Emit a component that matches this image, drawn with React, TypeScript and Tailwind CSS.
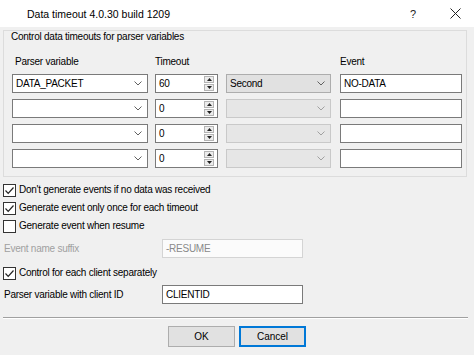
import React from "react";

const FONT = { fontFamily: '"Liberation Sans", Arial, sans-serif' };

function Chevron({ color = "#606060" }: { color?: string }) {
  return (
    <svg width="8" height="5" viewBox="0 0 8 5" className="shrink-0">
      <polyline points="0.5,0.5 4,4 7.5,0.5" fill="none" stroke={color} strokeWidth="1" />
    </svg>
  );
}

function Combo({ text }: { text?: string }) {
  return (
    <div className="w-[136px] h-[19px] bg-white border border-[#7a7a7a] flex items-center pl-[3px] pr-[5px]">
      <span className="flex-1 truncate">{text}</span>
      <Chevron />
    </div>
  );
}

function Spin({ value }: { value: string }) {
  return (
    <div className="ml-[7px] w-[63px] h-[19px] bg-white border border-[#7a7a7a] flex items-center pl-[3px] pr-[3px]">
      <span className="flex-1">{value}</span>
      <div className="flex flex-col gap-[1px]">
        <div className="w-[10px] h-[7px] bg-[#ececec] border border-[#b4b4b4] flex items-center justify-center">
          <svg width="5" height="3" viewBox="0 0 5 3"><polygon points="2.5,0 5,3 0,3" fill="#222" /></svg>
        </div>
        <div className="w-[10px] h-[7px] bg-[#ececec] border border-[#b4b4b4] flex items-center justify-center">
          <svg width="5" height="3" viewBox="0 0 5 3"><polygon points="0,0 5,0 2.5,3" fill="#222" /></svg>
        </div>
      </div>
    </div>
  );
}

function Unit({ text, active }: { text?: string; active?: boolean }) {
  return (
    <div
      className={
        "ml-[8px] w-[105px] h-[19px] flex items-center pl-[3px] pr-[5px] border " +
        (active ? "bg-[#e1e1e1] border-[#adadad]" : "bg-[#e6e6e6] border-[#c9c9c9]")
      }
    >
      <span className="flex-1">{text}</span>
      <Chevron color={active ? "#606060" : "#a0a0a0"} />
    </div>
  );
}

function Field({ text }: { text?: string }) {
  return (
    <div className="ml-[9px] w-[122px] h-[19px] bg-white border border-[#7a7a7a] flex items-center pl-[3px]">
      {text}
    </div>
  );
}

function Check({ checked, label, className = "" }: { checked: boolean; label: string; className?: string }) {
  return (
    <div className={"h-[18px] flex items-center pl-[3px] gap-[3px] " + className}>
      <div className="w-[13px] h-[13px] bg-white border border-[#333333] flex items-center justify-center">
        {checked && (
          <svg width="11" height="11" viewBox="0 0 11 11">
            <polyline points="1.5,5.5 4.2,8.3 9.5,2.5" fill="none" stroke="#222" strokeWidth="1.2" />
          </svg>
        )}
      </div>
      <span>{label}</span>
    </div>
  );
}

export default function App() {
  const rows = [
    { combo: "DATA_PACKET", spin: "60", unit: "Second", event: "NO-DATA", active: true },
    { combo: "", spin: "0", unit: "", event: "", active: false },
    { combo: "", spin: "0", unit: "", event: "", active: false },
    { combo: "", spin: "0", unit: "", event: "", active: false },
  ];
  return (
    <div
      className="w-[474px] h-[355px] bg-[#f0f0f0] flex flex-col text-[10px] tracking-[-0.25px] leading-[12px] text-black overflow-hidden"
      style={FONT}
    >
      {/* Title bar */}
      <div className="h-[27px] bg-white flex items-center shrink-0">
        <span className="pl-[27px] text-[10.5px] tracking-normal">Data timeout 4.0.30 build 1209</span>
        <span className="ml-auto mr-[34px] text-[11px] tracking-normal text-[#222]">?</span>
        <svg width="11" height="11" viewBox="0 0 11 11" className="mr-[13px]">
          <line x1="0.5" y1="0.5" x2="10.5" y2="10.5" stroke="#222" strokeWidth="1" />
          <line x1="10.5" y1="0.5" x2="0.5" y2="10.5" stroke="#222" strokeWidth="1" />
        </svg>
      </div>

      {/* Group box */}
      <div className="mt-[3px] ml-[3px] w-[464px] h-[147px] border border-[#dcdcdc] pl-[8px] flex flex-col shrink-0">
        <div className="-ml-[1px] leading-[11px]">Control data timeouts for parser variables</div>
        <div className="mt-[14px] flex h-[12px]">
          <span className="w-[136px] pl-[3px]">Parser variable</span>
          <span className="ml-[7px] w-[63px]">Timeout</span>
          <span className="ml-[8px] w-[105px]"></span>
          <span className="ml-[9px]">Event</span>
        </div>
        <div className="mt-[6px] flex flex-col gap-[6px]">
          {rows.map((r, i) => (
            <div key={i} className="flex">
              <Combo text={r.combo} />
              <Spin value={r.spin} />
              <Unit text={r.unit} active={r.active} />
              <Field text={r.event} />
            </div>
          ))}
        </div>
      </div>

      {/* Options */}
      <div className="mt-[4px] flex flex-col">
        <Check checked label="Don't generate events if no data was received" />
        <Check checked label="Generate event only once for each timeout" />
        <Check checked={false} label="Generate event when resume" />
        <div className="mt-[4px] h-[19px] flex items-center">
          <span className="w-[162px] pl-[4px] text-[#a0a0a0]">Event name suffix</span>
          <div className="w-[141px] h-[19px] bg-[#fbfbfb] border border-[#d4d4d4] flex items-center pl-[3px] text-[#8a8a8a]">
            -RESUME
          </div>
        </div>
        <Check checked className="mt-[6px]" label="Control for each client separately" />
        <div className="mt-[3px] h-[19px] flex items-center">
          <span className="w-[162px] pl-[4px]">Parser variable with client ID</span>
          <div className="w-[141px] h-[19px] bg-white border border-[#7a7a7a] flex items-center pl-[3px]">
            CLIENTID
          </div>
        </div>
      </div>

      {/* Separator */}
      <div className="mt-[13px] ml-[3px] w-[465px] border-t border-[#a0a0a0] border-b border-b-white" />

      {/* Buttons */}
      <div className="mt-[7px] flex pl-[168px] gap-[4px] tracking-normal">
        <button className="w-[67px] h-[21px] bg-[#e1e1e1] border border-[#adadad] flex items-center justify-center">
          OK
        </button>
        <button className="w-[67px] h-[21px] bg-[#e1e1e1] border-2 border-[#0078d7] flex items-center justify-center">
          Cancel
        </button>
      </div>
    </div>
  );
}
